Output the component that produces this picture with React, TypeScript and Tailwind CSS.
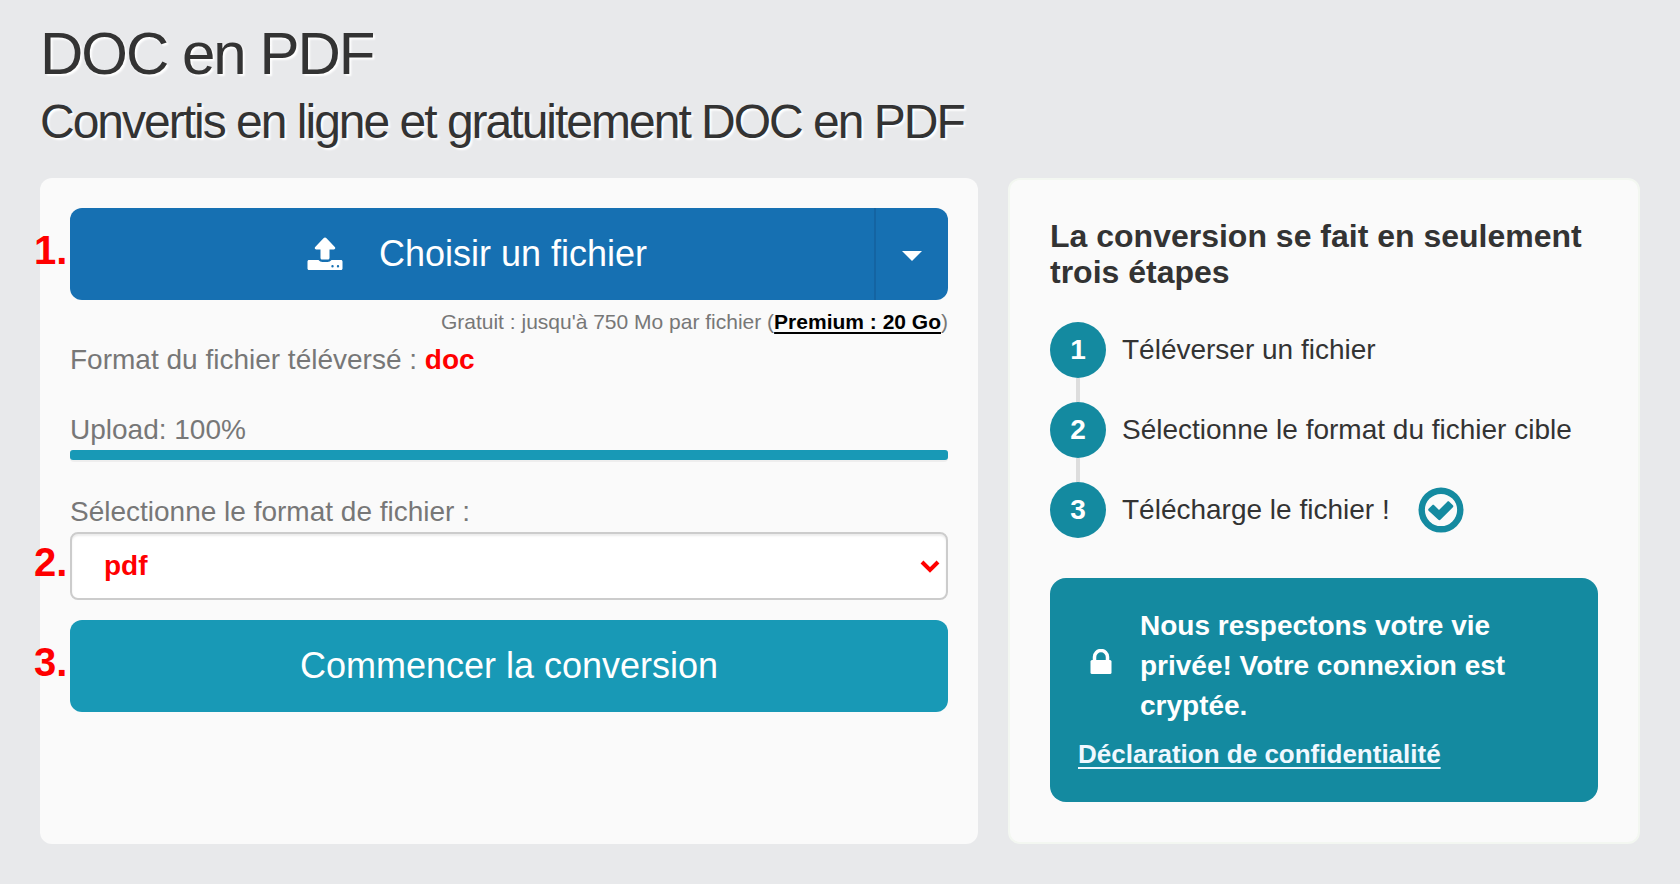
import React, { useState } from 'react';

const FORMATS = ['pdf', 'docx', 'odt', 'rtf', 'txt'];

const STEPS = [
  { id: 1, label: 'Téléverser un fichier' },
  { id: 2, label: 'Sélectionne le format du fichier cible' },
  { id: 3, label: 'Télécharge le fichier !' },
];

const UploadIcon = () => (
  <svg width="36" height="34" viewBox="0 0 36 34" fill="currentColor" aria-hidden="true">
    <path d="M18 0.5c.6 0 1.1.2 1.5.7l8.300 8.700c.9 1 .4 2.600-1 2.600H22.500V21c0 .8-.7 1.500-1.500 1.500h-6c-.8 0-1.500-.7-1.500-1.500v-8.500H9.200c-1.400 0-1.900-1.600-1-2.600l8.300-8.700c.4-.5.900-.700 1.500-.700z" />
    <path
      fillRule="evenodd"
      d="M2 23h9.500c1 1.300 2.400 2 4 2h5c1.600 0 3-.7 4-2H34c.9 0 1.500.6 1.500 1.500V31.500c0 .9-.6 1.500-1.500 1.500H2c-.9 0-1.500-.6-1.500-1.500V24.500c0-.9.6-1.500 1.500-1.500zM25.500 28a1.200 1.200 0 1 0 0 2.400 1.200 1.200 0 0 0 0-2.400zM31 28a1.200 1.200 0 1 0 0 2.400 1.200 1.200 0 0 0 0-2.400z"
    />
  </svg>
);

const LockIcon = () => (
  <svg width="22" height="26" viewBox="0 0 22 26" fill="none" aria-hidden="true">
    <rect x="0.500" y="11" width="21" height="14" rx="1.500" fill="currentColor" />
    <path d="M4.500 12V8a6.500 6.500 0 0 1 13 0v4" stroke="currentColor" strokeWidth="3.500" />
  </svg>
);

const CheckIcon = () => (
  <svg width="46" height="46" viewBox="0 0 46 46" fill="none" aria-hidden="true">
    <circle cx="23" cy="23" r="19.300" stroke="currentColor" strokeWidth="6.400" />
    <path
      d="M10.600 21.800l3.600-3.600c.6-.6 1.400-.6 2 0l4.800 4.800 8.300-8.300c.6-.6 1.400-.6 2 0l3.600 3.600c.6.6.6 1.400 0 2L22.400 32.800c-.6.600-1.400.600-2 0l-9.800-9c-.6-.6-.6-1.400 0-2z"
      fill="currentColor"
    />
  </svg>
);

const Marker = ({ n }: { n: number }) => (
  <span className="absolute inset-y-0 -left-9 flex items-center pb-2 text-[40px] leading-10 font-bold text-[#ff0000]">
    {n}.
  </span>
);

const ConvertPanel = () => {
  const [format, setFormat] = useState('pdf');
  const progress = 100;

  return (
    <section className="rounded-[12px] bg-[#fafafa] p-[30px] text-[28px] leading-10 text-[#777777]">
      {/* File picker */}
      <div className="relative flex h-[92px] text-white">
        <Marker n={1} />
        <button
          type="button"
          className="flex flex-1 items-center justify-center gap-9 rounded-l-[12px] bg-[#1670b2] pl-[10px] text-[36px]"
        >
          <UploadIcon />
          Choisir un fichier
        </button>
        <button
          type="button"
          aria-label="Autres sources"
          className="flex w-[74px] items-center justify-center rounded-r-[12px] border-l-2 border-[#1464a2] bg-[#1670b2] pt-1"
        >
          <svg width="20" height="10" viewBox="0 0 20 10" fill="currentColor" aria-hidden="true">
            <path d="M0 0h20L10 10z" />
          </svg>
        </button>
      </div>

      <p className="mt-1 text-right text-[21px] leading-9">
        Gratuit : jusqu'à 750 Mo par fichier (
        <a href="#premium" className="font-bold text-black underline decoration-2 underline-offset-3">Premium : 20 Go</a>)
      </p>
      <p>
        Format du fichier téléversé : <strong className="text-[#ff0000]">doc</strong>
      </p>

      {/* Upload progress */}
      <p className="mt-[30px]">Upload: {progress}%</p>
      <div className="h-3 rounded-[4px] bg-[#eeeeee]">
        <div className="h-[10px] rounded-[3px] bg-[#1899b6]" style={{ width: `${progress}%` }}></div>
      </div>

      {/* Target format */}
      <label htmlFor="format" className="mt-[30px] block">Sélectionne le format de fichier :</label>
      <div className="relative">
        <Marker n={2} />
        <select
          id="format"
          value={format}
          onChange={(e) => setFormat(e.target.value)}
          className="block h-[68px] w-full appearance-none rounded-[8px] border-2 border-[#cccccc] bg-white pl-8 font-bold text-[#ff0000] shadow-[inset_0_2px_2px_rgba(0,0,0,0.08)]"
        >
          {FORMATS.map((f) => (
            <option key={f} value={f}>{f}</option>
          ))}
        </select>
        <span className="pointer-events-none absolute inset-y-0 right-2 flex items-center text-[#ff0000]">
          <svg width="20" height="13" viewBox="0 0 20 13" fill="none" aria-hidden="true">
            <path d="M2 2l8 8 8-8" stroke="currentColor" strokeWidth="4" />
          </svg>
        </span>
      </div>

      <div className="relative mt-5">
        <Marker n={3} />
        <button type="button" className="h-[92px] w-full rounded-[12px] bg-[#1899b6] text-[36px] text-white">
          Commencer la conversion
        </button>
      </div>
    </section>
  );
};

const StepsPanel = () => (
  <aside className="rounded-[12px] border-2 border-[#f3f7f1] bg-[#fafafa] px-10 pt-[38px] pb-10 text-[28px] leading-10 text-[#333333]">
    <h3 className="text-[32px] leading-9 font-bold">La conversion se fait en seulement trois étapes</h3>

    <ol className="mt-8">
      {STEPS.map((step, i) => (
        <li key={step.id}>
          {i > 0 && <div className="ml-[26px] h-6 w-1 bg-[#dddddd]"></div>}
          <div className="flex h-14 items-center">
            <span className="mr-4 flex size-14 items-center justify-center rounded-full bg-[#148aa0] font-bold text-white">
              {step.id}
            </span>
            {step.label}
            {i === STEPS.length - 1 && <span className="ml-7 text-[#148aa0]"><CheckIcon /></span>}
          </div>
        </li>
      ))}
    </ol>

    <div className="mt-10 rounded-[16px] bg-[#148aa0] p-7 font-bold text-white">
      <div className="flex items-center gap-7 pl-3">
        <span className="shrink-0 pb-2"><LockIcon /></span>
        <p className="max-w-[400px]">Nous respectons votre vie privée! Votre connexion est cryptée.</p>
      </div>
      <a href="#privacy" className="mt-2 block text-[26px] text-[#f0f8ff] underline decoration-2 underline-offset-4">
        Déclaration de confidentialité
      </a>
    </div>
  </aside>
);

const App: React.FC = () => {
  return (
    <main className="min-h-screen bg-[#e8e9eb] px-10 pt-[22px] pb-10 font-['Liberation_Sans',Arial,sans-serif]">
      <header className="mb-7 tracking-[-2px] text-[#333333] [text-shadow:2px_2px_2px_#ffffff]">
        <h1 className="text-[60px] leading-[64px]">DOC en PDF</h1>
        <h2 className="mt-2 text-[48px] leading-[56px]">Convertis en ligne et gratuitement DOC en PDF</h2>
      </header>
      <div className="grid grid-cols-[469fr_316fr] gap-[30px]">
        <ConvertPanel />
        <StepsPanel />
      </div>
    </main>
  );
};

export default App;
